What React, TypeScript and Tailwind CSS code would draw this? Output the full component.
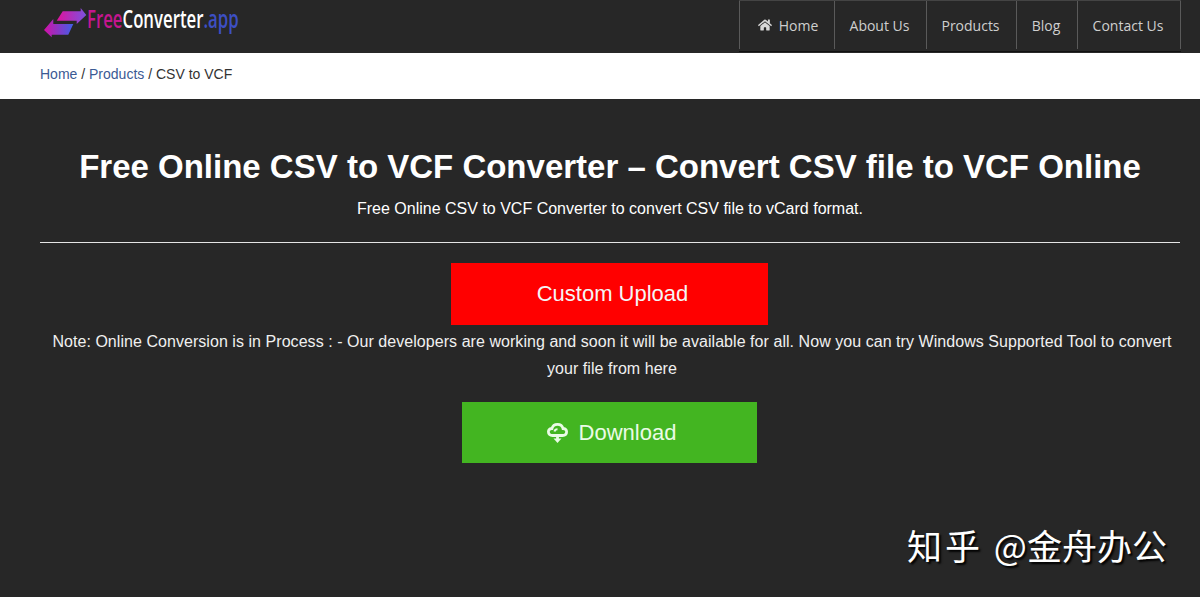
import { FaHome } from "react-icons/fa";

const navItems = ["About Us", "Products", "Blog", "Contact Us"];

const Logo = () => {
  return (
    <div className="flex items-start">
      <svg width="43" height="30" viewBox="0 0 43 30" className="shrink-0">
        <defs>
          <linearGradient id="logoA" x1="0" y1="0" x2="1" y2="0">
            <stop offset="0" stopColor="#e0129c" />
            <stop offset="1" stopColor="#7a52e0" />
          </linearGradient>
          <linearGradient id="logoB" x1="0" y1="0" x2="1" y2="0">
            <stop offset="0" stopColor="#d410a6" />
            <stop offset="1" stopColor="#3f5fe8" />
          </linearGradient>
        </defs>
        <path d="M12.7 12.7L18.7 3.3H36.7V0L42.3 7L32.7 16V12.7Z" fill="url(#logoA)" />
        <path d="M0 22L9.3 11V16H29.3L24.3 26.7H7.7V29.3Z" fill="url(#logoB)" />
      </svg>
      <span className="-mt-[3px] origin-left scale-x-[0.645] font-['Open_Sans',sans-serif] text-[26px] leading-none font-semibold whitespace-nowrap">
        <span className="text-[#c4168f]">Free</span>
        <span className="text-white">Converter</span>
        <span className="text-[#3d4fc4]">.app</span>
      </span>
    </div>
  );
};

const CloudIcon = () => {
  return (
    <svg width="21" height="20" viewBox="0 0 21 20" fill="none" stroke="#eafbe6" strokeWidth="2.8">
      <path d="M5.5 12.5C3 12.5 1.4 11 1.4 8.8C1.4 6.8 3 5.4 5 5.5C5.6 3 7.8 1.4 10.5 1.4C13.2 1.4 15.4 3 16 5.5C18 5.4 19.6 6.8 19.6 8.8C19.6 11 18 12.5 15.5 12.5Z" />
      <path d="M7.5 8.5C7.8 7 9 6.3 10.5 6.3" strokeWidth="2" />
      <path d="M10.5 12V16" />
      <path d="M6.5 15.5H14.5L10.5 20Z" fill="#eafbe6" stroke="none" />
    </svg>
  );
};

export default function App() {
  return (
    <div className="relative h-[597px] overflow-hidden bg-[#272727] font-['Liberation_Sans',sans-serif]">
      {/* Header */}
      <header className="flex h-[53px] items-start justify-between pr-[19px] pl-[44px]">
        <div className="pt-[8px]">
          <Logo />
        </div>
        <nav className="flex h-[52px] border-t border-b border-t-[#444] border-b-[#111] pb-[2px] font-['Open_Sans',sans-serif] text-[14px] text-[#cfcfcf]">
          <a className="flex w-[96px] items-center justify-center gap-[7px] border-x border-x-[#5a5a5a] pl-[2px]">
            <FaHome className="text-[14px] text-[#d8d8d8]" />
            <span>Home</span>
          </a>
          {navItems.map((item, i) => (
            <a
              key={item}
              className={
                "flex items-center justify-center border-r border-r-[#5a5a5a] pr-[2px] " +
                (i === 0 ? "w-[92px]" : i === 1 ? "w-[90px]" : i === 2 ? "w-[61px]" : "w-[103px]")
              }
            >
              {item}
            </a>
          ))}
        </nav>
      </header>

      {/* Breadcrumb */}
      <div className="flex h-[46px] items-center bg-white pr-5 pb-[3px] pl-10 text-[14px] text-[#333]">
        <a className="text-[#3b5a94]">Home</a>
        <span className="whitespace-pre"> / </span>
        <a className="text-[#3b5a94]">Products</a>
        <span className="whitespace-pre"> / CSV to VCF</span>
      </div>

      {/* Main */}
      <main className="flex flex-col items-center pt-[48px] pr-5 pl-10 text-white">
        <h1 className="text-[33px] leading-[40px] font-bold whitespace-nowrap">
          Free Online CSV to VCF Converter – Convert CSV file to VCF Online
        </h1>
        <p className="mt-[11px] text-[16px] leading-[22px]">
          Free Online CSV to VCF Converter to convert CSV file to vCard format.
        </p>
        <hr className="mt-[22px] w-full border-t border-[#e5e5e5]" />
        <button className="mt-5 mr-[1px] h-[62px] w-[317px] bg-[#ff0000] pb-[2px] pl-[6px] text-[22px] text-[#f5f5f5]">
          Custom Upload
        </button>
        <p className="mt-[3px] pl-1 text-center text-[16px] leading-[27px] tracking-[0.05px] text-[#f0f0f0]">
          Note: Online Conversion is in Process : - Our developers are working and soon it will be available for all. Now you can try Windows Supported Tool to convert
          <br />
          your file from here
        </p>
        <button className="mt-[20px] mr-[1px] flex h-[61px] w-[295px] items-center justify-center gap-[11px] bg-[#43b521] pl-[4px] text-[22px] text-[#eafbe6]">
          <CloudIcon />
          <span>Download</span>
        </button>
      </main>

      {/* Watermark */}
      <div className="absolute top-[521px] left-[907px] font-['Noto_Sans_CJK_SC',sans-serif] text-[35px] leading-[48px] whitespace-nowrap text-white [word-spacing:3px] [text-shadow:2px_2px_2px_#000]">
        <span className="tracking-[3px]">知乎</span> @金舟办公
      </div>
    </div>
  );
}
